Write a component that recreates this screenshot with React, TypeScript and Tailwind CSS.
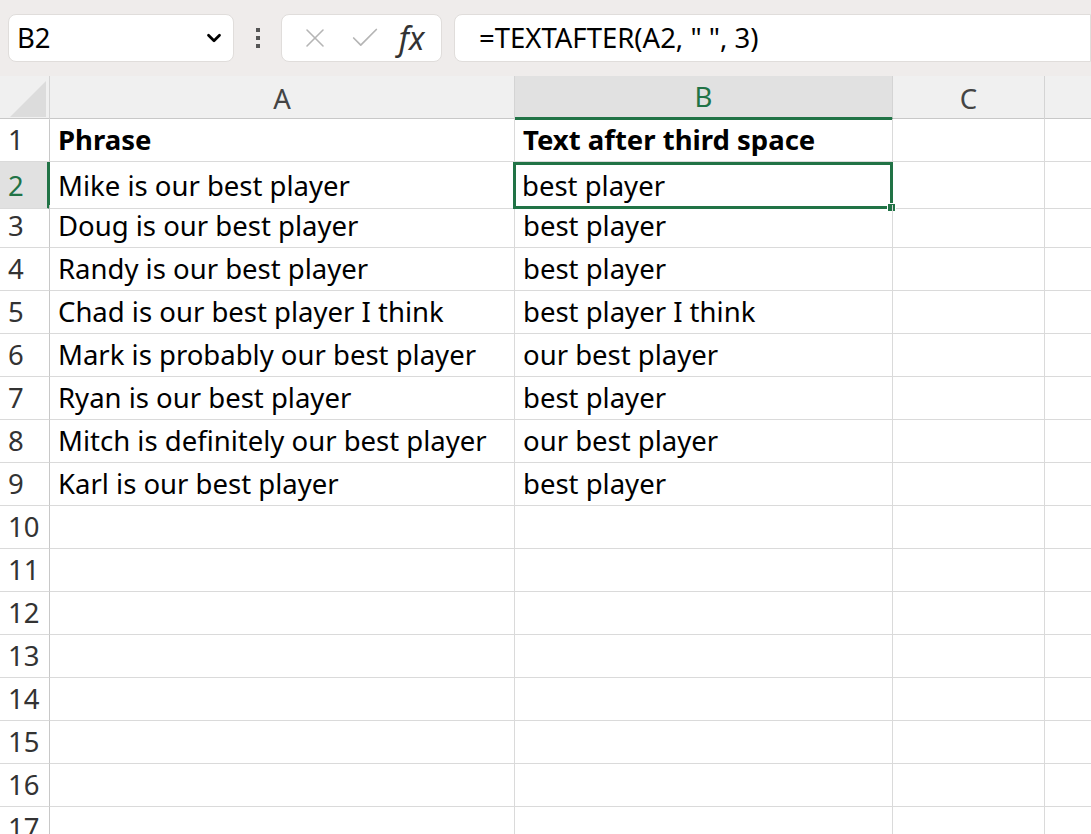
import { ChevronDown, X, Check } from 'lucide-react';

const rows: [string, string][] = [
  ['Mike is our best player', 'best player'],
  ['Doug is our best player', 'best player'],
  ['Randy is our best player', 'best player'],
  ['Chad is our best player I think', 'best player I think'],
  ['Mark is probably our best player', 'our best player'],
  ['Ryan is our best player', 'best player'],
  ['Mitch is definitely our best player', 'our best player'],
  ['Karl is our best player', 'best player'],
];

const cols = 'grid grid-cols-[50px_465px_378px_152px_1fr]';

function App() {
  const all: [string, string][] = [['Phrase', 'Text after third space'], ...rows];
  while (all.length < 17) all.push(['', '']);

  return (
    <div className="w-[1091px] h-[834px] overflow-hidden bg-white font-['Open_Sans',sans-serif] text-[27.5px] text-black">
      {/* formula bar */}
      <div className="h-[76px] bg-[#efeceb] flex items-center pl-2">
        <div className="w-[226px] h-[48px] bg-white rounded-lg border border-[#e0dddb] flex items-center justify-between px-2">
          <span>B2</span>
          <ChevronDown size={22} strokeWidth={3} />
        </div>
        <div className="w-[47px] flex flex-col items-center gap-[4px]">
          <span className="w-[4px] h-[4px] bg-[#555]" />
          <span className="w-[4px] h-[4px] bg-[#555]" />
          <span className="w-[4px] h-[4px] bg-[#555]" />
        </div>
        <div className="w-[161px] h-[48px] bg-white rounded-lg border border-[#e0dddb] flex items-center justify-around px-2 text-[#b5b5b5]">
          <X size={32} strokeWidth={1.2} />
          <Check size={34} strokeWidth={1.2} />
          <span className="font-['Liberation_Serif',serif] italic text-[32px] text-[#333]">fx</span>
        </div>
        <div className="ml-3 flex-1 h-[48px] bg-white rounded-l-lg border border-[#e0dddb] flex items-center pl-6">
          =TEXTAFTER(A2, " ", 3)
        </div>
      </div>
      {/* column header */}
      <div className={`${cols} h-[43px] bg-[#f0f0f0] border-b border-[#c8c8c8] text-[#444]`}>
        <div className="border-r border-[#d4d4d4] relative overflow-hidden">
          <div className="absolute right-[3px] bottom-[3px] w-0 h-0 border-l-[36px] border-l-transparent border-b-[36px] border-b-[#dcdcdc]" />
        </div>
        <div className="border-r border-[#d4d4d4] flex items-center justify-center">A</div>
        <div className="border-r border-[#d4d4d4] bg-[#e1e1e1] border-b-[3px] border-b-[#217346] text-[#217346] flex items-center justify-center">B</div>
        <div className="border-r border-[#d4d4d4] flex items-center justify-center">C</div>
        <div />
      </div>
      {all.map(([a, b], i) => (
        <div key={i} className={`${cols} h-[43px]`}>
          <div
            className={`pl-2 flex items-center border-b border-[#dadada] text-[#333] ${
              i === 1 ? 'bg-[#e1e1e1] border-r-[3px] border-r-[#217346] text-[#217346]' : 'border-r border-r-[#c8c8c8]'
            }`}
          >
            {i + 1}
          </div>
          <div className={`pl-2 flex items-center border-r border-b border-[#dadada] whitespace-nowrap ${i === 0 ? 'font-bold' : ''}`}>{a}</div>
          <div
            className={`pl-2 flex items-center whitespace-nowrap relative ${
              i === 1 ? 'border-[3px] border-[#217346] -ml-[2px] pl-[6px]' : 'border-r border-b border-[#dadada]'
            } ${i === 0 ? 'font-bold' : ''}`}
          >
            {b}
            {i === 1 && <span className="absolute -right-[6px] -bottom-[6px] w-[9px] h-[9px] bg-[#217346] border border-white" />}
          </div>
          <div className="border-r border-b border-[#dadada]" />
          <div className="border-b border-[#dadada]" />
        </div>
      ))}
    </div>
  );
}

export default App;
